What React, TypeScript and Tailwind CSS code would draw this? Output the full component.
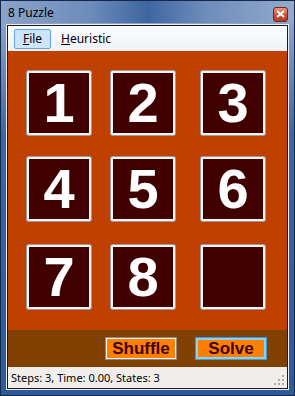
const tiles: (number | null)[] = [1, 2, 3, 4, 5, 6, 7, 8, null];

function Tile({ value }: { value: number | null }) {
  return (
    <div className="w-[66px] h-[66px] border border-[#9c9c9c] rounded-[2px] bg-[#400000] shadow-[inset_0_0_0_2px_#f2f2f2] flex items-center justify-center">
      {value !== null && (
        <span className="text-white text-[56px] font-bold leading-none font-['Liberation_Sans',Arial,sans-serif]">
          {value}
        </span>
      )}
    </div>
  );
}

function GripDots() {
  return (
    <svg width="11" height="11" viewBox="0 0 11 11">
      {[
        [8, 0],
        [4, 4],
        [8, 4],
        [0, 8],
        [4, 8],
        [8, 8],
      ].map(([x, y], i) => (
        <rect key={i} x={x} y={y} width="2" height="2" fill="#a8a8a8" />
      ))}
    </svg>
  );
}

export default function App() {
  return (
    <div className="w-[295px] h-[396px] flex flex-col bg-[#2c5b98] border border-[#13284a] font-['Noto_Sans',sans-serif] text-[12px] text-black">
      {/* title bar */}
      <div className="h-[22px] flex items-center justify-between pl-[7px] pr-[6px] bg-[linear-gradient(90deg,#8ba3c8_0%,#6e8cbb_30%,#3f66a0_50%,#6f8dbb_70%,#92aacd_100%)]">
        <span className="text-[12px] text-black leading-none pt-[1px]">8 Puzzle</span>
        <div className="w-[15px] h-[15px] mt-[4px] rounded-[3px] border border-[#6b2a1e] bg-[linear-gradient(180deg,#e49580_0%,#c84f34_55%,#b73a22_100%)] flex items-center justify-center">
          <svg width="9" height="8" viewBox="0 0 9 8">
            <path d="M1 1 L8 7 M8 1 L1 7" stroke="#fff" strokeWidth="2" />
          </svg>
        </div>
      </div>

      {/* frame + client */}
      <div className="flex-1 flex px-[5px] pb-[5px] pt-[1px] bg-[linear-gradient(180deg,#8ba3c8_0%,#3f66a0_30%,#2c5b98_100%)]">
        <div className="flex-1 flex border border-[#e9eef5]">
          <div className="flex-1 flex flex-col border border-[#1a1a1a] bg-[#f0f0f0]">
            {/* menu bar */}
            <div className="h-[25px] flex items-center gap-[3px] pl-[6px] bg-[linear-gradient(180deg,#fbfcfd,#eef1f5)]">
              <div className="h-[20px] w-[37px] flex items-center justify-center border border-[#62a4e6] rounded-[2px] bg-[#cde5fb]">
                <span>
                  <span className="underline">F</span>ile
                </span>
              </div>
              <div className="h-[20px] px-[7px] flex items-center">
                <span>
                  <span className="underline">H</span>euristic
                </span>
              </div>
            </div>

            {/* board */}
            <div className="h-[279px] bg-[#c04000] grid grid-cols-[84px_90px_66px] grid-rows-[86px_88px_66px] pl-[18px] pt-[19px]">
              {tiles.map((t, i) => (
                <Tile key={i} value={t} />
              ))}
            </div>

            {/* controls */}
            <div className="h-[37px] bg-[#804000] flex items-center justify-end gap-[18px] pr-[20px]">
              <button className="w-[72px] h-[23px] bg-[#ff8000] border border-[#8a8a8a] shadow-[inset_0_0_0_1px_#f4f4f4] text-[#400000] text-[17px] font-bold leading-none font-['Liberation_Sans',Arial,sans-serif]">
                Shuffle
              </button>
              <button className="w-[72px] h-[23px] bg-[#ff8000] border border-[#3c9ad8] shadow-[inset_0_0_0_2px_#86d1f7] text-[#400000] text-[17px] font-bold leading-none font-['Liberation_Sans',Arial,sans-serif]">
                Solve
              </button>
            </div>

            {/* status bar */}
            <div className="flex-1 flex items-center justify-between pl-[3px] pr-[2px] bg-[#f0edea]">
              <span className="leading-none text-[11px]">Steps: 3, Time: 0.00, States: 3</span>
              <div className="self-end mb-[2px]">
                <GripDots />
              </div>
            </div>
          </div>
        </div>
      </div>
    </div>
  );
}
